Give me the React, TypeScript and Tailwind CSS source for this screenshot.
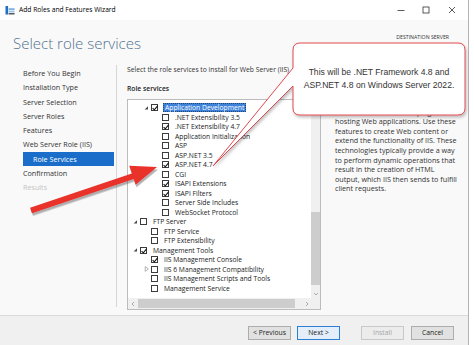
import React from "react";

const NAV_ITEMS = [
  "Before You Begin",
  "Installation Type",
  "Server Selection",
  "Server Roles",
  "Features",
  "Web Server Role (IIS)",
  "Role Services",
  "Confirmation",
  "Results",
];

type Row = {
  label: string;
  level: 0 | 1 | 2;
  arrow?: "open" | "closed";
  checked?: boolean;
  selected?: boolean;
};

const ROWS: Row[] = [
  { label: "Application Development", level: 1, arrow: "open", checked: true, selected: true },
  { label: ".NET Extensibility 3.5", level: 2 },
  { label: ".NET Extensibility 4.7", level: 2, checked: true },
  { label: "Application Initialization", level: 2 },
  { label: "ASP", level: 2 },
  { label: "ASP.NET 3.5", level: 2 },
  { label: "ASP.NET 4.7", level: 2, checked: true },
  { label: "CGI", level: 2 },
  { label: "ISAPI Extensions", level: 2, checked: true },
  { label: "ISAPI Filters", level: 2, checked: true },
  { label: "Server Side Includes", level: 2 },
  { label: "WebSocket Protocol", level: 2 },
  { label: "FTP Server", level: 0, arrow: "open" },
  { label: "FTP Service", level: 1 },
  { label: "FTP Extensibility", level: 1 },
  { label: "Management Tools", level: 0, arrow: "open", checked: true },
  { label: "IIS Management Console", level: 1, checked: true },
  { label: "IIS 6 Management Compatibility", level: 1, arrow: "closed" },
  { label: "IIS Management Scripts and Tools", level: 1 },
  { label: "Management Service", level: 1 },
];

const INDENT = ["pl-[4px]", "pl-[15px]", "pl-[26px]"];

const DESCRIPTION = [
  "Application Development provides",
  "infrastructure for developing and",
  "hosting Web applications. Use these",
  "features to create Web content or",
  "extend the functionality of IIS. These",
  "technologies typically provide a way",
  "to perform dynamic operations that",
  "result in the creation of HTML",
  "output, which IIS then sends to fulfill",
  "client requests.",
];

function Checkbox({ checked }: { checked?: boolean }) {
  return (
    <span className="relative w-[7px] h-[7px] shrink-0 border border-[#3c3c3c] bg-white">
      {checked && (
        <svg viewBox="0 0 8 8" className="absolute left-[-1px] top-[-1px] w-[8px] h-[8px]">
          <path d="M1.6 4.1 L3.3 5.8 L6.6 1.9" stroke="#111" strokeWidth="1.1" fill="none" />
        </svg>
      )}
    </span>
  );
}

function Expander({ kind }: { kind?: "open" | "closed" }) {
  return (
    <span className="w-[8px] h-[8px] shrink-0 flex items-center">
      {kind === "open" && (
        <svg viewBox="0 0 8 8" className="w-[8px] h-[8px]">
          <polygon points="5,2.2 5,5.6 1.6,5.6" fill="#4a4a4a" />
        </svg>
      )}
      {kind === "closed" && (
        <svg viewBox="0 0 8 8" className="w-[8px] h-[8px]">
          <polygon points="2.2,1.6 5.4,4 2.2,6.4" fill="none" stroke="#a0a0a0" strokeWidth="0.8" />
        </svg>
      )}
    </span>
  );
}

function TreeRow({ row }: { row: Row }) {
  return (
    <div className={`h-[9.5px] flex items-center whitespace-nowrap ${INDENT[row.level]}`}>
      <Expander kind={row.arrow} />
      <Checkbox checked={row.checked} />
      {row.selected ? (
        <span className="ml-[5px] h-[9px] px-[1px] flex items-center bg-[#3d82da] text-white border border-dotted border-[#24446e]">
          {row.label}
        </span>
      ) : (
        <span className="ml-[6px] text-[#1a1a1a]">{row.label}</span>
      )}
    </div>
  );
}

function WizardButton({
  children,
  variant = "default",
}: {
  children: React.ReactNode;
  variant?: "default" | "primary" | "disabled";
}) {
  const styles = {
    default: "border-[#adadad] bg-[#e1e1e1] text-[#222]",
    primary: "border-[#2b7fd4] bg-[#e3eefa] text-[#222]",
    disabled: "border-[#c8c8c8] bg-[#ececec] text-[#a6a6a6]",
  }[variant];
  return (
    <div className={`w-[43px] h-[14px] border flex items-center justify-center text-[6.8px] ${styles}`}>
      {children}
    </div>
  );
}

function Chevron({ dir }: { dir: "up" | "down" | "left" | "right" }) {
  const d = {
    up: "M2 5 L4 3 L6 5",
    down: "M2 3 L4 5 L6 3",
    left: "M5 2 L3 4 L5 6",
    right: "M3 2 L5 4 L3 6",
  }[dir];
  return (
    <svg viewBox="0 0 8 8" className="w-[8px] h-[8px]">
      <path d={d} stroke="#9a9a9a" strokeWidth="0.8" fill="none" />
    </svg>
  );
}

export default function App() {
  return (
    <div className="relative w-[474px] h-[345px] overflow-hidden bg-white font-['Open_Sans','Noto_Sans',sans-serif] text-[#222]">
      <div className="w-[469px] h-full flex flex-col bg-[#f9f9f9] border-r border-[#b4b4b4]">
        {/* title bar */}
        <div className="h-[20px] shrink-0 bg-white flex items-center pl-[5px]">
          <svg viewBox="0 0 10 10" className="w-[10px] h-[10px]">
            <rect x="0.5" y="1" width="2.6" height="8.5" fill="#1f6fc5" />
            <rect x="3.6" y="3.2" width="6" height="2" fill="#7fb2e5" />
            <rect x="3.6" y="5.8" width="6" height="1.6" fill="#9cc3ea" />
            <rect x="3.6" y="8" width="6" height="1.5" fill="#5a5a5a" />
          </svg>
          <span className="ml-[4px] text-[6.7px] text-black">Add Roles and Features Wizard</span>
          <div className="ml-auto mr-[3px] flex items-center">
            <div className="w-[25px] h-[20px] flex items-center justify-center">
              <svg viewBox="0 0 8 8" className="w-[8px] h-[8px]">
                <path d="M0.5 4.5 H7.5" stroke="#333" strokeWidth="0.8" />
              </svg>
            </div>
            <div className="w-[25px] h-[20px] flex items-center justify-center">
              <svg viewBox="0 0 8 8" className="w-[8px] h-[8px]">
                <rect x="1" y="1" width="6" height="6" stroke="#333" strokeWidth="0.8" fill="none" />
              </svg>
            </div>
            <div className="w-[27px] h-[20px] flex items-center justify-center">
              <svg viewBox="0 0 8 8" className="w-[8px] h-[8px]">
                <path d="M1 1 L7 7 M7 1 L1 7" stroke="#333" strokeWidth="0.8" />
              </svg>
            </div>
          </div>
        </div>

        {/* header */}
        <div className="h-[42px] shrink-0 flex items-start justify-between">
          <div className="pt-[13px] pl-[13px] text-[15px] leading-[20px] font-light text-[#52738f]">
            Select role services
          </div>
          <div className="pt-[14px] pr-[19px] text-[5.2px] leading-[6px] text-[#333]">DESTINATION SERVER</div>
        </div>

        {/* main */}
        <div className="flex flex-1 min-h-0">
          <div className="w-[116px] shrink-0 pl-[23px] pt-[4px] flex flex-col">
            {NAV_ITEMS.map((item) => {
              if (item === "Role Services") {
                return (
                  <div key={item} className="w-[91px] h-[14.3px] leading-[14.3px] pl-[10px] text-[7.2px] bg-[#1a6ec9] text-white">
                    {item}
                  </div>
                );
              }
              return (
                <div
                  key={item}
                  className={`h-[14.3px] leading-[14.3px] text-[7.2px] ${item === "Results" ? "text-[#c4c4c4]" : "text-[#333]"}`}
                >
                  {item}
                </div>
              );
            })}
          </div>
          <div className="w-px mt-[3px] mb-[8px] bg-[#d6d6d6]" />

          <div className="flex-1 flex flex-col pl-[10px] pt-[3px] text-[6.75px]">
            <div className="h-[9.5px] leading-[9.5px] text-[#333]">
              Select the role services to install for Web Server (IIS)
            </div>
            <div className="mt-[9px] h-[9.5px] leading-[9.5px] font-semibold text-[#222]">Role services</div>

            <div className="mt-[6px] flex">
              {/* tree */}
              <div className="w-[194px] h-[211px] border border-[#bcbcbc] bg-white flex flex-col">
                <div className="flex flex-1 min-h-0">
                  <div className="flex-1 overflow-hidden pt-[3px] leading-[9.5px]">
                    {ROWS.map((row) => (
                      <TreeRow key={row.label} row={row} />
                    ))}
                  </div>
                  <div className="w-[9px] bg-[#f0f0f0] flex flex-col">
                    <div className="h-[9px] flex items-center justify-center">
                      <Chevron dir="up" />
                    </div>
                    <div className="flex-1 flex flex-col">
                      <div className="mt-[103px] h-[73px] bg-[#cdcdcd]" />
                    </div>
                    <div className="h-[9px] flex items-center justify-center">
                      <Chevron dir="down" />
                    </div>
                  </div>
                </div>
                <div className="h-[11px] flex bg-[#f0f0f0]">
                  <div className="w-[10px] flex items-center justify-center">
                    <Chevron dir="left" />
                  </div>
                  <div className="flex-1 flex items-center">
                    <div className="w-[157px] h-[9px] bg-[#cdcdcd]" />
                  </div>
                  <div className="w-[9px] flex items-center justify-center">
                    <Chevron dir="right" />
                  </div>
                  <div className="w-[9px] bg-[#f0f0f0]" />
                </div>
              </div>

              {/* description */}
              <div className="flex-1 pl-[14px] -mt-[1px] text-[7.2px] leading-[9.6px] text-[#333] whitespace-nowrap">
                {DESCRIPTION.map((line) => (
                  <div key={line}>{line}</div>
                ))}
              </div>
            </div>
          </div>
        </div>

        {/* buttons */}
        <div className="h-[30px] shrink-0 border-t border-[#dadada] bg-[#f0f0f0] flex items-start justify-end pt-[10px] pr-[14px]">
          <WizardButton>&lt; Previous</WizardButton>
          <div className="ml-[6px]">
            <WizardButton variant="primary">Next &gt;</WizardButton>
          </div>
          <div className="ml-[21px]">
            <WizardButton variant="disabled">Install</WizardButton>
          </div>
          <div className="ml-[7px]">
            <WizardButton>Cancel</WizardButton>
          </div>
        </div>
      </div>

      {/* annotations */}
      <svg className="absolute left-0 top-0 pointer-events-none" width="474" height="345" viewBox="0 0 474 345">
        <defs>
          <filter id="calloutShadow" x="-20%" y="-20%" width="140%" height="150%">
            <feDropShadow dx="1" dy="2" stdDeviation="1.6" floodColor="#000" floodOpacity="0.25" />
          </filter>
          <filter id="arrowShadow" x="-10%" y="-30%" width="120%" height="160%">
            <feDropShadow dx="1" dy="2.5" stdDeviation="0.7" floodColor="#555" floodOpacity="0.45" />
          </filter>
        </defs>
        <path
          d="M293 86 L293 108 Q293 115 300 115 L458 115 Q465 115 465 108 L465 50 Q465 43 458 43 L300 43 Q293 43 293 50 L293 68 L213 166 Z"
          fill="#fff"
          stroke="#e04a50"
          strokeWidth="1"
          filter="url(#calloutShadow)"
        />
        <g filter="url(#arrowShadow)">
          <line x1="31" y1="210.5" x2="135" y2="175.5" stroke="#e8302c" strokeWidth="6" />
          <polygon points="157,167 135.6,184.8 129.2,165.8" fill="#e8302c" />
        </g>
      </svg>
      <div className="absolute left-[293px] top-[43px] w-[172px] h-[72px] flex items-center justify-center text-center font-['Liberation_Sans',Arial,sans-serif] text-[8.6px] leading-[13px] text-[#333]">
        <div>
          This will be .NET Framework 4.8 and
          <br />
          ASP.NET 4.8 on Windows Server 2022.
        </div>
      </div>
    </div>
  );
}
